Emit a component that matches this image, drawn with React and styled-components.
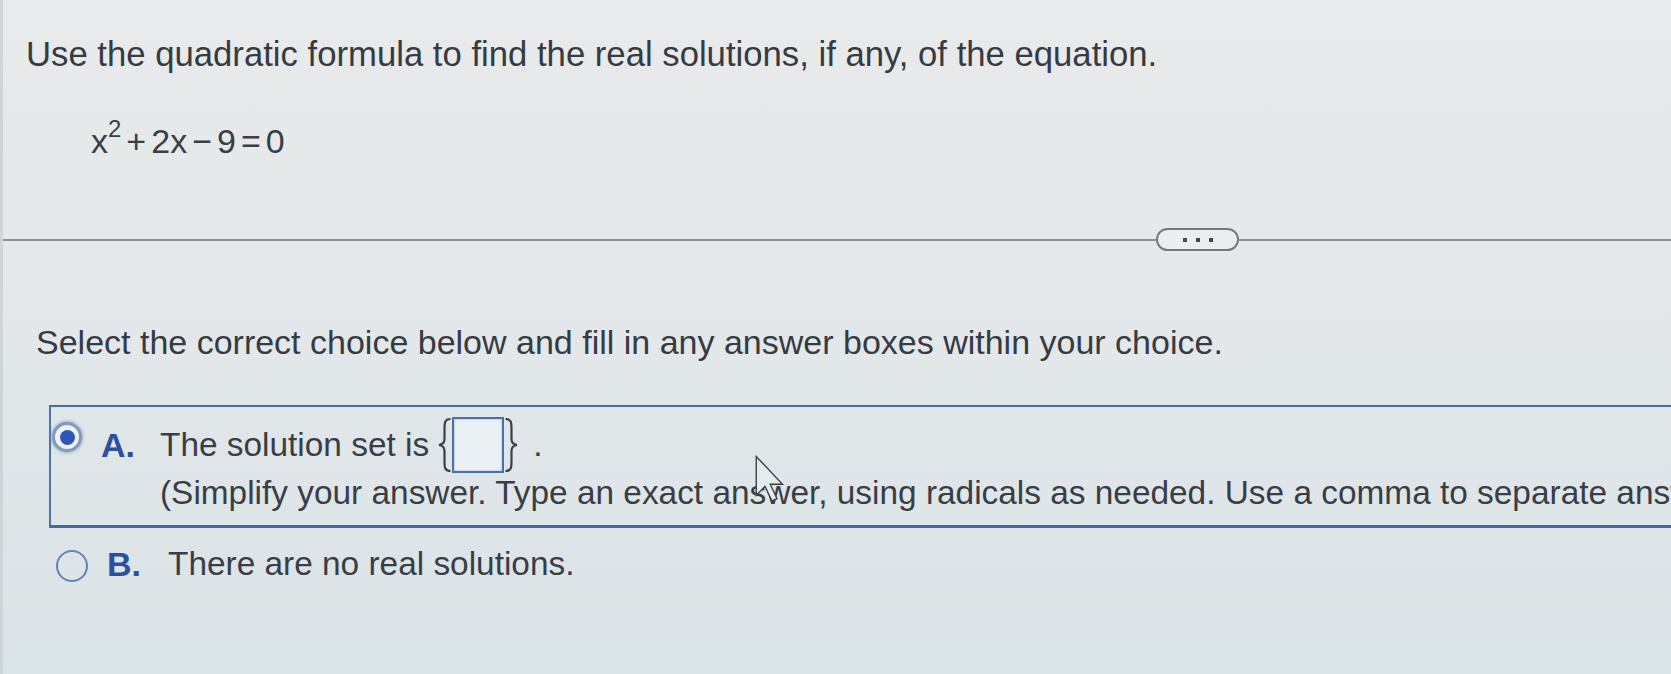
import React from "react";
import styled, { createGlobalStyle } from "styled-components";

const Global = createGlobalStyle`
  html, body {
    margin: 0;
    padding: 0;
    width: 1671px;
    height: 674px;
    overflow: hidden;
  }
  body {
    font-family: "Liberation Sans", Arial, sans-serif;
    color: #393e46;
    background: linear-gradient(180deg, #e8eaeb 0%, #e4e8ea 45%, #dae3e6 100%);
  }
`;

const Page = styled.div`
  position: relative;
  width: 1671px;
  height: 674px;
  box-sizing: border-box;
  padding-top: 34px;
  border-left: 3px solid #cfd4d6;
  overflow: hidden;
`;

const Title = styled.div`
  margin-left: 23px;
  font-size: 34.7px;
  line-height: 40px;
  white-space: nowrap;
  color: #363b42;
`;

const Equation = styled.div`
  margin: 47px 0 0 88px;
  font-size: 34px;
  line-height: 40px;
  white-space: nowrap;
  color: #3a3f47;
`;

const Sup = styled.sup`
  font-size: 24px;
  line-height: 0;
  position: relative;
  top: -4px;
  vertical-align: super;
`;

const Op = styled.span`
  padding: 0 5px;
`;

const Divider = styled.div`
  display: flex;
  align-items: center;
  margin-top: 66px;
  height: 25px;
  margin-left: -3px;
`;

const Rule = styled.div`
  height: 2px;
  background: #8b9297;
  flex: ${(p) => (p.$grow ? 1 : "none")};
  width: ${(p) => (p.$grow ? "auto" : `${p.$w}px`)};
`;

const Pill = styled.div`
  box-sizing: border-box;
  width: 83px;
  height: 23px;
  border: 2px solid #727a81;
  border-radius: 12px;
  background: #eceeee;
  display: flex;
  align-items: center;
  justify-content: center;
  gap: 9px;
`;

const Dot = styled.span`
  width: 4px;
  height: 4px;
  background: #464b51;
`;

const Prompt = styled.div`
  margin: 70px 0 0 33px;
  font-size: 34px;
  line-height: 40px;
  white-space: nowrap;
  color: #363b42;
`;

const ChoiceRow = styled.div`
  display: grid;
  grid-template-columns: 30px ${(p) => p.$letterGap}px auto;
  column-gap: 0;
  align-items: start;
  margin-left: ${(p) => p.$indent}px;
  margin-top: ${(p) => p.$top}px;
  white-space: nowrap;
  ${(p) =>
    p.$selected &&
    `
    border-top: 2px solid #43709f;
    border-left: 2px solid #4a76a6;
    border-bottom: 3px solid #3c6d9e;
    padding: 18px 0 12px 1px;
  `}
`;

const RadioOuter = styled.span`
  box-sizing: border-box;
  display: flex;
  align-items: center;
  justify-content: center;
  width: ${(p) => p.$size}px;
  height: ${(p) => p.$size}px;
  border-radius: 50%;
  margin-top: ${(p) => p.$mt}px;
  border: ${(p) => (p.$checked ? "3px solid #8299bf" : "2.5px solid #6284b6")};
  background: ${(p) => (p.$checked ? "#eef2f6" : "transparent")};
  box-shadow: ${(p) =>
    p.$checked ? "0 0 3px 1px rgba(96,132,190,0.55)" : "none"};
`;

const RadioDot = styled.span`
  width: 15px;
  height: 15px;
  border-radius: 50%;
  background: #2c57b6;
`;

const Letter = styled.span`
  font-size: 34px;
  line-height: 40px;
  font-weight: bold;
  color: #2d4f9f;
  padding-left: ${(p) => p.$pad}px;
`;

const Body = styled.div`
  display: flex;
  flex-direction: column;
  gap: 8px;
`;

const Line = styled.div`
  font-size: 33.4px;
  line-height: 40px;
  color: #393e46;
  display: flex;
  align-items: center;
`;

const BraceGroup = styled.span`
  display: inline-flex;
  align-items: center;
  margin-left: 8px;
  height: 40px;
`;

const AnswerBox = styled.span`
  box-sizing: border-box;
  width: 52px;
  height: 56px;
  border: 2px solid #4a70aa;
  background: #e9eff2;
  box-shadow: inset 0 0 2px rgba(70, 110, 170, 0.5);
`;

const Period = styled.span`
  margin-left: 14px;
`;

const Cursor = styled.svg`
  position: absolute;
  left: 752px;
  top: 455px;
  overflow: visible;
`;

const Brace = ({ flip }) => (
  <svg
    width="15"
    height="56"
    viewBox="0 0 14 56"
    style={flip ? { transform: "scaleX(-1)" } : undefined}
  >
    <path
      d="M13 2 C7 2 7 6 7 12 L7 22 C7 26 5 27.5 1.5 28 C5 28.5 7 30 7 34 L7 44 C7 50 7 54 13 54"
      fill="none"
      stroke="#3a414e"
      strokeWidth="2.2"
    />
  </svg>
);

export default function App() {
  return (
    <>
      <Global />
      <Page>
        <Title>
          Use the quadratic formula to find the real solutions, if any, of the
          equation.
        </Title>
        <Equation>
          x<Sup>2</Sup>
          <Op>+</Op>2x<Op>−</Op>9<Op>=</Op>0
        </Equation>
        <Divider>
          <Rule $w={1156} />
          <Pill>
            <Dot />
            <Dot />
            <Dot />
          </Pill>
          <Rule $grow />
        </Divider>
        <Prompt>
          Select the correct choice below and fill in any answer boxes within
          your choice.
        </Prompt>
        <ChoiceRow $selected $indent={46} $top={43} $letterGap={78}>
          <RadioOuter $checked $size={30} $mt={-3}>
            <RadioDot />
          </RadioOuter>
          <Letter $pad={19}>A.</Letter>
          <Body>
            <Line>
              The solution set is
              <BraceGroup>
                <Brace />
                <AnswerBox />
                <Brace flip />
              </BraceGroup>
              <Period>.</Period>
            </Line>
            <Line>
              (Simplify your answer. Type an exact answer, using radicals as
              needed. Use a comma to separate answers as needed.)
            </Line>
          </Body>
        </ChoiceRow>
        <ChoiceRow $indent={53} $top={16} $letterGap={82}>
          <RadioOuter $size={32} $mt={6} />
          <Letter $pad={21}>B.</Letter>
          <Body>
            <Line>There are no real solutions.</Line>
          </Body>
        </ChoiceRow>
        <Cursor width="30" height="48" viewBox="0 0 12 19">
          <path
            d="M0.5 0.5 L0.5 16 L4 12.5 L6.8 18.3 L8.8 17.4 L6.1 11.6 L11 11.6 Z"
            fill="#e6ecee"
            stroke="#3a3f47"
            strokeWidth="0.55"
            strokeLinejoin="miter"
          />
        </Cursor>
      </Page>
    </>
  );
}
